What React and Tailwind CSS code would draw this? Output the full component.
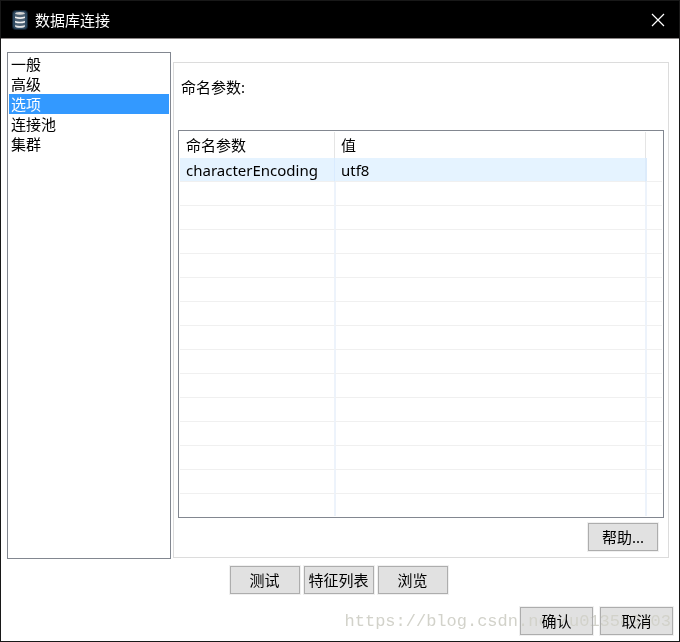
import { useState } from "react";

const sections = ["一般", "高级", "选项", "连接池", "集群"];
const params = [{ name: "characterEncoding", value: "utf8" }];
const emptyRows = Array.from({ length: 13 }, (_, i) => i);

function Button({ children, wide }) {
  return (
    <button
      type="button"
      className={
        "h-7 border border-[#adadad] bg-[#e1e1e1] outline outline-[#f0f0f0] text-center whitespace-nowrap " +
        (wide ? "w-[73px]" : "w-[70px]")
      }
    >
      {children}
    </button>
  );
}

function DatabaseIcon() {
  return (
    <svg width="18" height="20" viewBox="0 0 18 20" aria-hidden="true">
      <rect x="1" y="0" width="16" height="20" rx="4" fill="#13222f" />
      <rect x="2" y="1" width="14" height="18" rx="3.5" fill="#2f4a61" />
      <rect x="4" y="2" width="10" height="16" rx="2.5" fill="#4d6274" />
      <path d="M5 2.6q4-1.2 8 0l1 1.2q-5 1.8-10 0z" fill="#d3d3d3" />
      <path d="M4 6.6q5 1.4 10 0v1.4q-5 1.8-10 0z" fill="#eeeeee" />
      <path d="M4 11q5 1.4 10 0v1.4q-5 1.8-10 0z" fill="#f4f4f4" />
      <path d="M4 15.2q5 1.4 10 0v1q-1 1.6-5 1.6t-5-1.6z" fill="#e6e6e6" />
    </svg>
  );
}

export default function App() {
  const [active, setActive] = useState("选项");

  return (
    <div className="relative min-h-screen flex flex-col border border-[#181818] bg-white text-black text-[15px] leading-5 font-['Noto_Sans','Noto_Sans_CJK_SC',sans-serif]">
      <header className="h-[38px] flex items-center justify-between bg-black border-b border-[#8a8585] pl-[10px] pr-[14px] text-white">
        <div className="flex items-center gap-[6px]">
          <DatabaseIcon />
          <h1>数据库连接</h1>
        </div>
        <button type="button" aria-label="关闭">
          <svg width="14" height="14" viewBox="0 0 14 14" stroke="#fff" strokeWidth="1.2">
            <path d="M1 1l12 12M13 1L1 13" />
          </svg>
        </button>
      </header>

      <main className="flex-1 flex flex-col pt-[13px] pb-[6px] pl-[6px] pr-[6px]">
        <div className="flex-1 flex gap-[2px]">
          <nav className="w-[164px] shrink-0 border border-[#828790] p-px">
            {sections.map((s) => (
              <button
                key={s}
                type="button"
                onClick={() => setActive(s)}
                className={
                  "block w-full h-5 pl-[2px] text-left " +
                  (s === active ? "bg-[#3399ff] text-white" : "")
                }
              >
                {s}
              </button>
            ))}
          </nav>

          <section className="flex-1 flex flex-col mt-[10px] mb-px mr-[4px] border border-[#dcdcdc] px-[4px] pb-[6px]">
            <h2 className="pt-[14px] pb-[33px] pl-[3px]">命名参数:</h2>
            <div className="flex-1 border border-[#828790] p-px">
              <table className="w-full table-fixed border-separate border-spacing-0 text-left">
                <colgroup>
                  <col className="w-[154px]" />
                  <col />
                  <col className="w-[17px]" />
                </colgroup>
                <thead>
                  <tr className="h-[26px]">
                    <th className="p-0 pl-[6px] font-normal">命名参数</th>
                    <th className="p-0 pl-[6px] font-normal border-l border-[#e5e5e5]">值</th>
                    <th className="p-0 border-l border-[#e5e5e5]"></th>
                  </tr>
                </thead>
                <tbody>
                  {params.map((p) => (
                    <tr key={p.name} className="h-6">
                      <td className="p-0 pl-[6px] bg-[#e5f3ff] border-b border-[#f0f0f0]">{p.name}</td>
                      <td className="p-0 pl-[6px] bg-[#e5f3ff] border-l border-b border-l-[#d9ebff] border-b-[#f0f0f0]">{p.value}</td>
                      <td className="p-0 border-l-2 border-b border-l-[#dcebfb] border-b-[#f0f0f0]"></td>
                    </tr>
                  ))}
                  {emptyRows.map((i) => (
                    <tr key={i} className="h-6">
                      <td className="p-0 border-b border-[#f0f0f0]"></td>
                      <td className="p-0 border-l-2 border-b border-l-[#edf3fb] border-b-[#f0f0f0]"></td>
                      <td className="p-0 border-l-2 border-b border-l-[#edf3fb] border-b-[#f0f0f0]"></td>
                    </tr>
                  ))}
                  <tr className="h-[22px]">
                    <td className="p-0"></td>
                    <td className="p-0 border-l-2 border-[#edf3fb]"></td>
                    <td className="p-0 border-l-2 border-[#edf3fb]"></td>
                  </tr>
                </tbody>
              </table>
            </div>
            <div className="flex justify-end pt-[5px] pr-[6px]">
              <Button>帮助...</Button>
            </div>
          </section>
        </div>

        <div className="flex justify-center gap-1 pt-[7px] pr-[3px]">
          <Button>测试</Button>
          <Button>特征列表</Button>
          <Button>浏览</Button>
        </div>

        <div className="flex justify-end gap-[7px] pt-[13px]">
          <Button wide>确认</Button>
          <Button wide>取消</Button>
        </div>
      </main>

      <div className="absolute right-[8px] bottom-[9px] text-[17px] leading-5 text-[#d2d2ca] mix-blend-darken font-['Liberation_Mono','Noto_Sans_CJK_SC',monospace] pointer-events-none">
        https://blog.csdn.net/u013583203
      </div>
    </div>
  );
}
